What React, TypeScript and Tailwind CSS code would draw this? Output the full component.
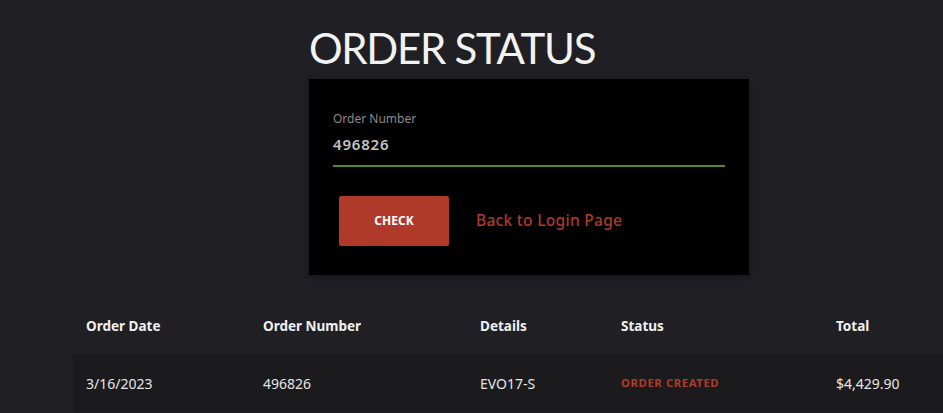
export default function App() {
  const cols = [
    { label: "Order Date", w: "w-[177px]" },
    { label: "Order Number", w: "w-[217px]" },
    { label: "Details", w: "w-[141px]" },
    { label: "Status", w: "w-[215px]" },
    { label: "Total", w: "w-[120px]" },
  ];

  return (
    <div className="min-h-[413px] w-[943px] overflow-hidden bg-[#202024] font-['Noto_Sans',sans-serif]">
      {/* Title + lookup card */}
      <div className="ml-[309px] w-[440px] pt-[22px]">
        <h1 className="font-['Lato',sans-serif] text-[42px] leading-[52px] tracking-[-1.3px] text-[#f2f2f2]">
          ORDER STATUS
        </h1>
        <div className="mt-[5px] h-[196px] bg-black px-[24px] pt-[32px] shadow-[0_2px_8px_rgba(0,0,0,0.35)]">
          <div className="text-[12px] leading-[16px] text-[#8a8a8a]">Order Number</div>
          <div className="mt-[7px] border-b-2 border-[#4f8a2c] pb-[11px] text-[15px] font-semibold leading-[20px] tracking-[0.8px] text-[#c4c4c4]">
            496826
          </div>
          <div className="mt-[29px] flex items-center">
            <button className="ml-[6px] h-[50px] w-[110px] rounded-[2px] bg-[#b03a29] text-[12px] font-bold text-white">
              CHECK
            </button>
            <span className="ml-[27px] text-[15.5px] font-medium tracking-[0.3px] text-[#b03a29]">
              Back to Login Page
            </span>
          </div>
        </div>
      </div>

      {/* Results table */}
      <div className="ml-[73px] mt-[38px]">
        <div className="flex h-[27px] items-center pl-[13px] text-[13.5px] font-bold text-[#f0f0f0]">
          {cols.map((c) => (
            <div key={c.label} className={`${c.w} shrink-0`}>
              {c.label}
            </div>
          ))}
        </div>
        <div className="mt-[14px] flex h-[58px] items-center bg-[#1b1b1e] pl-[13px] text-[14px] text-[#e6e6e6]">
          <div className="w-[177px] shrink-0">3/16/2023</div>
          <div className="w-[217px] shrink-0">496826</div>
          <div className="w-[141px] shrink-0">EVO17-S</div>
          <div className="w-[215px] shrink-0 text-[11.3px] font-bold tracking-[0.6px] text-[#b03a29]">ORDER CREATED</div>
          <div className="w-[120px] shrink-0">$4,429.90</div>
        </div>
      </div>
    </div>
  );
}
